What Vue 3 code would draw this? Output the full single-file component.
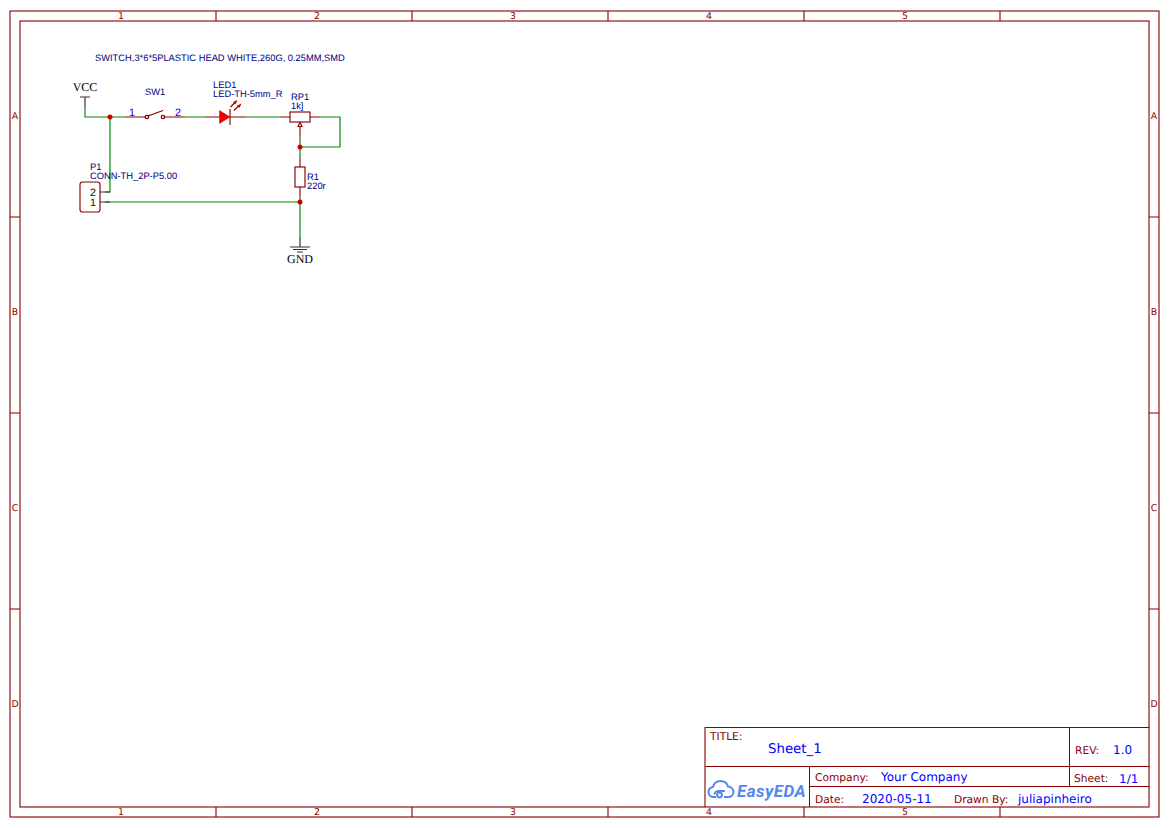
<template>
  <svg class="sheet" width="1169" height="828" viewBox="0 0 1169 828" xmlns="http://www.w3.org/2000/svg">
    <!-- frame -->
    <g class="frame">
      <rect x="10" y="11" width="1149" height="806" />
      <rect x="20" y="21" width="1129" height="786" />
      <path v-for="x in colTicks" :key="'c' + x" :d="`M${x} 11V21M${x} 807V817`" />
      <path v-for="y in rowTicks" :key="'r' + y" :d="`M10 ${y}H20M1149 ${y}H1159`" />
    </g>
    <g class="ref">
      <template v-for="c in cols" :key="'t' + c.n">
        <text :x="c.x" y="19" text-anchor="middle">{{ c.n }}</text>
        <text :x="c.x" y="815" text-anchor="middle">{{ c.n }}</text>
      </template>
      <template v-for="r in rows" :key="'l' + r.n">
        <text x="15" :y="r.y" text-anchor="middle">{{ r.n }}</text>
        <text x="1154" :y="r.y" text-anchor="middle">{{ r.n }}</text>
      </template>
    </g>

    <!-- wires -->
    <path class="wire" d="M85 107V117H125M110 117V192H105M185 117H205M245 117H280M320 117H340V147H300M300 137V157M105 202H300M300 197V237" />
    <!-- component pins -->
    <path class="pin" d="M125 117H145M165 117H185M205 117H220M230 117H245M280 117H290M310 117H320M300 126V137M300 157V167M300 187V197" />
    <path class="pin-grey" d="M85 97V107M80 97H90M100 192H110M100 202H110M300 237V247M290 247H310M293 249.5H307M297 252H303" />

    <!-- switch -->
    <g class="part-dark">
      <circle cx="147" cy="117" r="1.7" />
      <circle cx="163" cy="117" r="1.7" />
      <path d="M148 116L163 110.5" />
    </g>
    <!-- LED -->
    <path class="led" d="M219.5 110.5V123.5L230 117Z" />
    <path class="part" d="M230 109V125" />
    <path class="part" d="M230.5 107L235 102.5M234 110.5L238.5 106" />
    <path class="arrow" d="M233 102L237.5 100L235.5 104.5ZM237 105.5L241.5 103.5L239.5 108Z" />
    <!-- potentiometer -->
    <rect class="part" x="290" y="112" width="20" height="10" />
    <path class="part" d="M300 122.5L302 126.5H298Z" />
    <!-- resistor -->
    <rect class="part" x="295" y="167" width="10" height="20" />
    <!-- connector -->
    <rect class="part" x="80" y="182" width="20" height="30" rx="2.5" />

    <!-- junctions -->
    <circle class="dot" cx="110" cy="117" r="2.5" />
    <circle class="dot" cx="300" cy="147" r="2.5" />
    <circle class="dot" cx="300" cy="202" r="2.5" />

    <!-- labels -->
    <g class="label">
      <text x="95" y="60.5">SWITCH,3*6*5PLASTIC HEAD WHITE,260G, 0.25MM,SMD</text>
      <text x="145" y="94.5">SW1</text>
      <text x="213" y="88">LED1</text>
      <text x="213" y="97">LED-TH-5mm_R</text>
      <text x="291" y="100">RP1</text>
      <text x="291" y="109">1k]</text>
      <text x="90" y="170">P1</text>
      <text x="90" y="179">CONN-TH_2P-P5.00</text>
      <text x="307" y="180">R1</text>
      <text x="307" y="189">220r</text>
    </g>
    <g class="pin-no">
      <text x="129" y="116">1</text>
      <text x="175" y="116">2</text>
    </g>
    <g class="pin-no dark">
      <text x="90" y="196">2</text>
      <text x="90" y="206">1</text>
    </g>
    <text class="net" x="85" y="91" text-anchor="middle">VCC</text>
    <text class="net" x="300" y="263" text-anchor="middle">GND</text>

    <!-- title block -->
    <path class="tb" d="M705.5 727.5H1149.5M705.5 766.5H1149.5M809.5 786.5H1149.5M809.5 766.5V807M1069.5 727.5V786.5" />
    <path class="frame-line" d="M705 727V807" />
    <g class="tb-key">
      <text x="710" y="740">TITLE:</text>
      <text x="1075" y="754">REV:</text>
      <text x="815" y="781">Company:</text>
      <text x="1074" y="782">Sheet:</text>
      <text x="815" y="803">Date:</text>
      <text x="954" y="803">Drawn By:</text>
    </g>
    <g class="tb-val">
      <text class="big" x="768" y="753">Sheet_1</text>
      <text x="1113" y="754">1.0</text>
      <text x="881" y="781">Your Company</text>
      <text x="1119" y="783">1/1</text>
      <text x="862" y="803">2020-05-11</text>
      <text x="1018" y="803">juliapinheiro</text>
    </g>

    <!-- logo -->
    <path class="cloud" d="M716 797H713C710 797 708.5 794.5 708.5 792C708.5 789.5 710.5 787.5 713 787C714 783 717 781 720.5 781C724 781 727 783 728 786.5C731 786.5 733.5 789 733.5 792C733.5 795 731 797 728 797H724" />
    <path class="cloud" d="M714.5 794.5C714.5 792.5 716.5 791 718.5 791H725" />
    <circle class="cloud" cx="719.5" cy="795" r="2.4" />
    <text class="logo" x="737" y="797">EasyEDA</text>
  </svg>
</template>

<script setup>
const colTicks = [216, 412, 608, 804, 1000]
const rowTicks = [217, 413, 609]
const cols = [
  { n: 1, x: 121 },
  { n: 2, x: 317 },
  { n: 3, x: 513 },
  { n: 4, x: 709 },
  { n: 5, x: 905 },
]
const rows = [
  { n: 'A', y: 119 },
  { n: 'B', y: 315 },
  { n: 'C', y: 511 },
  { n: 'D', y: 707 },
]
</script>

<style scoped>
.sheet { display: block; background: #fff; text-rendering: geometricPrecision; }
.frame rect, .frame path { fill: none; stroke: #880000; stroke-width: 1.1; }
.frame-line { fill: none; stroke: #880000; stroke-width: 1.1; }
.ref text { font: 9.33px "DejaVu Sans", sans-serif; fill: #880000; }
.wire { fill: none; stroke: #008800; stroke-width: 1.15; }
.pin { fill: none; stroke: #880000; stroke-width: 1.1; }
.pin-grey { fill: none; stroke: #333; stroke-width: 1.2; }
.part { fill: none; stroke: #880000; stroke-width: 1.15; }
.part-dark { fill: none; stroke: #880000; stroke-width: 1.3; }
.led { fill: #e60000; stroke: #e60000; stroke-width: 0.5; }
.arrow { fill: #cc0000; }
.dot { fill: #cc0000; }
.label text { font: 9.33px "Liberation Sans", Arial, sans-serif; fill: #000080; }
.pin-no text { font: 10.67px "Liberation Sans", Arial, sans-serif; fill: #0000ff; }
.pin-no.dark text { fill: #111; }
.net { font: 12px "Liberation Serif", serif; fill: #000; }
.tb { fill: none; stroke: #880000; stroke-width: 1; }
.tb-key text { font: 10.67px "DejaVu Sans", sans-serif; fill: #880000; }
.tb-val text { font: 12px "DejaVu Sans", sans-serif; fill: #0000ff; }
.tb-val text.big { font-size: 13.33px; }
.cloud { fill: none; stroke: #5588ee; stroke-width: 2; }
.logo { font: italic 700 17px Roboto, sans-serif; letter-spacing: 0.45px; fill: #5588ee; }
</style>
